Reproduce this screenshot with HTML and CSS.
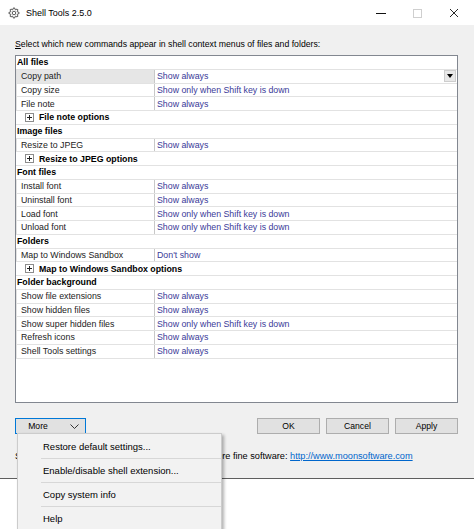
FILE: index.html
```html
<!DOCTYPE html>
<html lang="en">
<head>
    <meta charset="UTF-8">
    <title>Shell Tools 2.5.0</title>
    <link rel="stylesheet" href="styles.css">
</head>
<body>
    <div class="window">
        <div class="titlebar">
            <svg class="gear" width="12" height="12" viewBox="-0.5 -0.5 13 13">
                <polygon points="9.86,4.96 11.45,5.24 11.45,6.76 9.86,7.04 9.46,8 10.39,9.31 9.31,10.39 8,9.46 7.04,9.86 6.76,11.45 5.24,11.45 4.96,9.86 4,9.46 2.69,10.39 1.61,9.31 2.54,8 2.14,7.04 0.55,6.76 0.55,5.24 2.14,4.96 2.54,4 1.61,2.69 2.69,1.61 4,2.54 4.96,2.14 5.24,0.55 6.76,0.55 7.04,2.14 8,2.54 9.31,1.61 10.39,2.69 9.46,4" fill="none" stroke="#3a3a3a" stroke-width="0.9"/>
                <circle cx="6" cy="6" r="1.9" fill="none" stroke="#3a3a3a" stroke-width="0.9"/>
            </svg>
            <span class="title">Shell Tools 2.5.0</span>
            <div class="controls">
                <span><svg width="10" height="10"><line x1="0" y1="5.5" x2="10" y2="5.5" stroke="#111"/></svg></span>
                <span><svg width="10" height="10"><rect x="1.5" y="1.5" width="8" height="8" fill="none" stroke="#cfcfcf"/></svg></span>
                <span><svg width="10" height="10"><path d="M1 1 L9 9 M9 1 L1 9" stroke="#111" stroke-width="0.9"/></svg></span>
            </div>
        </div>

        <div class="content">
            <p class="intro"><u>S</u>elect which new commands appear in shell context menus of files and folders:</p>

            <div class="grid">
                <div class="row head">All files</div>
                <div class="row item selected"><div class="name">Copy path</div><div class="value">Show always<span class="drop"><svg width="6" height="4"><path d="M0 0 H6 L3 4 Z" fill="#000"/></svg></span></div></div>
                <div class="row item"><div class="name">Copy size</div><div class="value">Show only when Shift key is down</div></div>
                <div class="row item"><div class="name">File note</div><div class="value">Show always</div></div>
                <div class="row option"><svg class="plus" width="9" height="9"><rect x="0.5" y="0.5" width="8" height="8" fill="#fff" stroke="#8c8c8c"/><path d="M2 4.5 H7 M4.5 2 V7" stroke="#222"/></svg>File note options</div>
                <div class="row head">Image files</div>
                <div class="row item"><div class="name">Resize to JPEG</div><div class="value">Show always</div></div>
                <div class="row option"><svg class="plus" width="9" height="9"><rect x="0.5" y="0.5" width="8" height="8" fill="#fff" stroke="#8c8c8c"/><path d="M2 4.5 H7 M4.5 2 V7" stroke="#222"/></svg>Resize to JPEG options</div>
                <div class="row head">Font files</div>
                <div class="row item"><div class="name">Install font</div><div class="value">Show always</div></div>
                <div class="row item"><div class="name">Uninstall font</div><div class="value">Show always</div></div>
                <div class="row item"><div class="name">Load font</div><div class="value">Show only when Shift key is down</div></div>
                <div class="row item"><div class="name">Unload font</div><div class="value">Show only when Shift key is down</div></div>
                <div class="row head">Folders</div>
                <div class="row item"><div class="name">Map to Windows Sandbox</div><div class="value">Don't show</div></div>
                <div class="row option"><svg class="plus" width="9" height="9"><rect x="0.5" y="0.5" width="8" height="8" fill="#fff" stroke="#8c8c8c"/><path d="M2 4.5 H7 M4.5 2 V7" stroke="#222"/></svg>Map to Windows Sandbox options</div>
                <div class="row head">Folder background</div>
                <div class="row item"><div class="name">Show file extensions</div><div class="value">Show always</div></div>
                <div class="row item"><div class="name">Show hidden files</div><div class="value">Show always</div></div>
                <div class="row item"><div class="name">Show super hidden files</div><div class="value">Show only when Shift key is down</div></div>
                <div class="row item"><div class="name">Refresh icons</div><div class="value">Show always</div></div>
                <div class="row item"><div class="name">Shell Tools settings</div><div class="value">Show always</div></div>
            </div>

            <div class="buttons">
                <button class="btn more">More <svg width="9" height="5"><path d="M0.5 0.5 L4.5 4.5 L8.5 0.5" fill="none" stroke="#333"/></svg></button>
                <div class="spacer"></div>
                <button class="btn">OK</button>
                <button class="btn">Cancel</button>
                <button class="btn">Apply</button>
            </div>

            <p class="footer">Shell Tools is freeware. Please check out some more fine software: <a href="#">http://www.moonsoftware.com</a></p>
        </div>
    </div>

    <div class="menu">
        <div class="menu-item">Restore default settings...</div>
        <div class="sep"></div>
        <div class="menu-item">Enable/disable shell extension...</div>
        <div class="sep"></div>
        <div class="menu-item">Copy system info</div>
        <div class="sep"></div>
        <div class="menu-item">Help</div>
    </div>
</body>
</html>
```

FILE: styles.css
```css
html, body {
    margin: 0;
    padding: 0;
}
body {
    width: 474px;
    height: 529px;
    overflow: hidden;
    position: relative;
    background-color: #fff;
    font-family: "Liberation Sans", Arial, sans-serif;
    color: #000;
}
.window {
    height: 479px;
    box-sizing: border-box;
    background-color: #f0f0f0;
    border-bottom: 1px solid #5e5e5e;
}
.titlebar {
    height: 25px;
    background-color: #fff;
    display: flex;
    align-items: center;
    padding-left: 8px;
}
.titlebar .title {
    margin-left: 6px;
    font-size: 9px;
}
.controls {
    margin-left: auto;
    margin-right: 2px;
    display: flex;
}
.controls span {
    width: 36.5px;
    height: 25px;
    display: flex;
    align-items: center;
    justify-content: center;
}
.content {
    padding: 0 16px 0 15px;
}
.intro {
    margin: 0;
    padding-top: 13px;
    font-size: 8.7px;
    line-height: 12px;
}
.intro u {
    text-decoration: underline;
}
.grid {
    margin-top: 5px;
    height: 348px;
    box-sizing: border-box;
    border: 1px solid #828790;
    background-color: #fff;
}
.row {
    display: flex;
    align-items: center;
    height: 13.75px;
    box-sizing: border-box;
    border-bottom: 1px solid #e2e2e2;
    font-size: 8.8px;
    white-space: nowrap;
}
.row.head {
    font-weight: bold;
    padding-left: 1px;
}
.row.option {
    font-weight: bold;
    padding-left: 9px;
}
.row.option .plus {
    margin-right: 5px;
}
.row.item {
    align-items: stretch;
}
.row.item .name {
    width: 138px;
    box-sizing: border-box;
    padding-left: 4px;
    display: flex;
    align-items: center;
    border-left: 1px solid #e2e2e2;
    color: #222;
}
.row.selected .name {
    background-color: #e6e6e6;
}
.row.item .value {
    flex: 1;
    display: flex;
    align-items: center;
    padding-left: 2px;
    border-left: 1px solid #c8c8c8;
    color: #3a3a98;
}
.drop {
    margin-left: auto;
    margin-right: 1px;
    width: 12px;
    height: 12px;
    box-sizing: border-box;
    background-color: #e8e8e8;
    border: 1px solid #cdcdcd;
    display: flex;
    align-items: center;
    justify-content: center;
}
.buttons {
    margin-top: 15px;
    display: flex;
    gap: 6px;
}
.spacer {
    flex: 1;
}
.btn {
    width: 63px;
    height: 16px;
    padding: 0;
    margin: 0;
    background-color: #e1e1e1;
    border: 1px solid #adadad;
    font-family: "Liberation Sans", Arial, sans-serif;
    font-size: 8.6px;
    color: #000;
}
.btn.more {
    width: 71px;
    border-color: #0078d7;
    display: flex;
    align-items: center;
    justify-content: center;
    gap: 22px;
    padding-left: 6px;
}
.footer {
    margin: 16px 0 0;
    font-size: 9.2px;
    line-height: 12px;
    white-space: nowrap;
}
.footer a {
    color: #0066cc;
    text-decoration: underline;
}
.menu {
    position: absolute;
    left: 17px;
    top: 433px;
    width: 205px;
    height: 110px;
    box-sizing: border-box;
    padding-top: 1px;
    background-color: #f2f2f2;
    border: 1px solid #cccccc;
    box-shadow: 2px 2px 3px rgba(0, 0, 0, 0.3);
}
.menu-item {
    height: 23px;
    display: flex;
    align-items: center;
    padding-left: 25px;
    font-size: 9.5px;
    color: #000;
}
.sep {
    height: 1px;
    margin-left: 23px;
    background-color: #d7d7d7;
}
```
